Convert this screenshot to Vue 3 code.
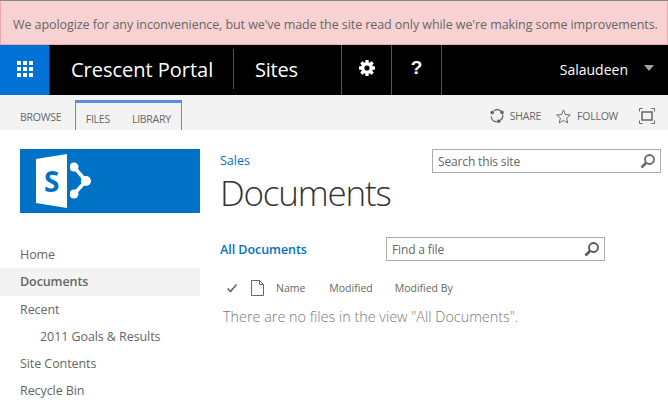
<script setup>
const navItems = [
  { label: "Home" },
  { label: "Documents", active: true },
  { label: "Recent" },
  { label: "2011 Goals & Results", sub: true },
  { label: "Site Contents" },
  { label: "Recycle Bin" },
]
</script>

<template>
  <div class="page">
    <div class="banner">We apologize for any inconvenience, but we've made the site read only while we're making some improvements.</div>

    <div class="suite">
      <div class="launcher">
        <svg width="16" height="16" viewBox="0 0 16 16" fill="#fff">
          <rect x="0" y="0" width="4" height="4" /><rect x="6" y="0" width="4" height="4" /><rect x="12" y="0" width="4" height="4" />
          <rect x="0" y="6" width="4" height="4" /><rect x="6" y="6" width="4" height="4" /><rect x="12" y="6" width="4" height="4" />
          <rect x="0" y="12" width="4" height="4" /><rect x="6" y="12" width="4" height="4" /><rect x="12" y="12" width="4" height="4" />
        </svg>
      </div>
      <div class="brand">Crescent Portal</div>
      <div class="sites">Sites</div>
      <div class="suite-btn first">
        <svg width="16" height="16" viewBox="0 0 16 16">
          <g fill="#fff">
            <rect x="6.300" y="0" width="3.400" height="16" rx=".6" />
            <rect x="6.300" y="0" width="3.400" height="16" rx=".6" transform="rotate(45 8 8)" />
            <rect x="6.300" y="0" width="3.400" height="16" rx=".6" transform="rotate(90 8 8)" />
            <rect x="6.300" y="0" width="3.400" height="16" rx=".6" transform="rotate(135 8 8)" />
            <circle cx="8" cy="8" r="6" />
          </g>
          <circle cx="8" cy="8" r="2.600" fill="#000" />
        </svg>
      </div>
      <div class="suite-btn help">?</div>
      <div class="user">
        <span>Salaudeen</span>
        <i class="caret"></i>
      </div>
    </div>

    <div class="ribbon">
      <div class="tabs">
        <span class="tab">BROWSE</span>
        <div class="tab-group">
          <span class="tab">FILES</span>
          <span class="tab">LIBRARY</span>
        </div>
      </div>
      <div class="actions">
        <span class="action">
          <svg width="14" height="14" viewBox="0 0 14 14" fill="none" stroke="#666" stroke-width="1.300">
            <path d="M3.800 1.900A5.800 5.800 0 0 1 11 2.200M12.700 5.500a5.800 5.800 0 0 1-2.600 6M6.800 12.800A5.800 5.800 0 0 1 1.200 7.500" />
            <circle cx="2.200" cy="3.600" r="1.800" fill="#666" stroke="none" />
            <circle cx="12" cy="3.400" r="1.800" fill="#666" stroke="none" />
            <circle cx="8.700" cy="12.200" r="1.800" fill="#666" stroke="none" />
          </svg>
          SHARE
        </span>
        <span class="action follow">
          <svg width="15" height="15" viewBox="0 0 16 16" fill="none" stroke="#666" stroke-width="1">
            <path d="M8 1l2 4.900 5.300.4-4 3.400 1.300 5.200L8 12.100l-4.600 2.800 1.300-5.200-4-3.400L6 5.900z" />
          </svg>
          FOLLOW
        </span>
        <svg class="focus" width="16" height="16" viewBox="0 0 16 16" fill="none" stroke="#666">
          <path d="M.5 3.500v-3h3M12.500.5h3v3M15.500 12.500v3h-3M3.500 15.500h-3v-3" />
          <rect x="3" y="4" width="10" height="8" stroke-width="1.500" />
        </svg>
      </div>
    </div>

    <div class="body">
      <aside class="side">
        <div class="logo">
          <svg width="56" height="54" viewBox="0 0 56 54">
            <path fill="#fff" d="M0 5L31 0V54L0 49z" />
            <path fill="none" stroke="#fff" stroke-width="3.500" d="M38 13L50 27L38 40" />
            <circle cx="38" cy="13" r="4.500" fill="#fff" />
            <circle cx="50" cy="27" r="5" fill="#fff" />
            <circle cx="38" cy="40" r="4.500" fill="#fff" />
            <rect x="31" y="5" width="3" height="44" fill="#0072c6" />
            <text x="8" y="38" class="logo-s">S</text>
          </svg>
        </div>
        <nav class="nav">
          <div v-for="item in navItems" :key="item.label" class="nav-item" :class="{ active: item.active, sub: item.sub }">{{ item.label }}</div>
        </nav>
      </aside>

      <main class="content">
        <div class="head">
          <div>
            <a class="crumb">Sales</a>
            <h1>Documents</h1>
          </div>
          <div class="searchbox site-search">
            <span>Search this site</span>
            <svg width="16" height="16" viewBox="0 0 16 16" fill="none" stroke="#666">
              <circle cx="9.500" cy="6.500" r="4.500" stroke-width="1.800" />
              <path d="M6 10l-4.500 4.500" stroke-width="2.500" />
            </svg>
          </div>
        </div>

        <div class="view-row">
          <a class="view">All Documents</a>
          <div class="searchbox file-search">
            <span>Find a file</span>
            <svg width="16" height="16" viewBox="0 0 16 16" fill="none" stroke="#555">
              <circle cx="9.500" cy="6.500" r="4.500" stroke-width="1.800" />
              <path d="M6 10l-4.500 4.500" stroke-width="2.500" />
            </svg>
          </div>
        </div>

        <div class="cols">
          <svg class="check" width="12" height="12" viewBox="0 0 12 12" fill="none" stroke="#666" stroke-width="1.600">
            <path d="M1.500 6.500l3 3 6-7" />
          </svg>
          <svg class="doc" width="13" height="16" viewBox="0 0 13 16" fill="none" stroke="#666">
            <path d="M.5.500h8l4 4v11h-12zM8.500.500v4h4" />
          </svg>
          <span class="col name">Name</span>
          <span class="col modified">Modified</span>
          <span class="col by">Modified By</span>
        </div>
        <div class="empty">There are no files in the view "All Documents".</div>
      </main>
    </div>
  </div>
</template>

<style>
html,
body {
  margin: 0;
  background: #fff;
  overflow: hidden;
}
</style>

<style scoped>
.page {
  width: 668px;
  height: 410px;
  overflow: hidden;
  font-family: "Open Sans", "Noto Sans", sans-serif;
  color: #666;
  border-top: 1px solid #888;
  box-sizing: border-box;
}

.banner {
  height: 44px;
  box-sizing: border-box;
  background: #f8d2d2;
  border: 1px solid #f0a8a8;
  border-top-color: #f8d2d2;
  padding: 0 0 0 12px;
  font-size: 12.500px;
  letter-spacing: -0.075px;
  line-height: 46px;
  white-space: nowrap;
  color: #666;
}

.suite {
  height: 50px;
  background: #000;
  display: flex;
  color: #fff;
}

.launcher {
  width: 50px;
  background: #0072d6;
  display: flex;
  align-items: center;
  justify-content: center;
  border-right: 1px solid #333;
  box-sizing: border-box;
}

.launcher svg {
  margin-top: -2px;
}

.brand {
  margin-left: 21px;
  width: 163px;
  font-size: 20px;
  line-height: 50px;
  position: relative;
  letter-spacing: -0.020px;
}

.brand::after {
  content: "";
  position: absolute;
  right: 0;
  top: 4px;
  height: 40px;
  width: 1px;
  background: #555;
}

.sites {
  margin-left: 21px;
  width: 86px;
  font-size: 20px;
  line-height: 50px;
  letter-spacing: -0.200px;
}

.suite-btn {
  width: 50px;
  height: 50px;
  border-left: 1px solid #555;
  box-sizing: border-box;
  display: flex;
  align-items: center;
  justify-content: center;
  padding-bottom: 4px;
}

.help {
  font-family: "Liberation Sans", sans-serif;
  font-size: 19px;
  font-weight: 700;
  border-right: 1px solid #555;
  width: 51px;
}

.user {
  margin-left: auto;
  display: flex;
  align-items: center;
  font-size: 14px;
  padding-right: 14px;
  padding-bottom: 1px;
  box-sizing: border-box;
}

.caret {
  display: block;
  margin-left: 16px;
  width: 0;
  height: 0;
  border-left: 5px solid transparent;
  border-right: 5px solid transparent;
  border-top: 6px solid #a0a0a0;
  margin-top: -3px;
}

.ribbon {
  height: 35px;
  background: #f3f3f3;
  display: flex;
  justify-content: space-between;
  font-size: 10.500px;
  letter-spacing: -0.250px;
}

.tabs {
  display: flex;
  align-items: flex-end;
  padding-left: 20px;
}

.tab {
  line-height: 33px;
  height: 29px;
  display: block;
}

.tab-group {
  display: flex;
  gap: 22px;
  height: 30px;
  margin-left: 13.500px;
  padding: 0 10px 0 10px;
  border: 1px solid #5b8fdc;
  border-top-width: 3px;
  border-bottom: 0;
  box-sizing: border-box;
  background: #f3f3f3;
}

.actions {
  display: flex;
  align-items: center;
  padding-right: 13px;
  padding-top: 7px;
  box-sizing: border-box;
}

.action {
  display: flex;
  align-items: center;
  gap: 6px;
}

.follow {
  margin-left: 15px;
}

.focus {
  margin-left: 21px;
}

.body {
  display: flex;
}

.side {
  width: 200px;
  flex: none;
}

.logo {
  margin: 19px 0 0 20px;
  width: 180px;
  height: 64px;
  background: #0072c6;
  display: flex;
  align-items: center;
  padding-left: 16px;
  box-sizing: border-box;
}

.logo-s {
  font-family: "Open Sans", sans-serif;
  font-size: 28px;
  font-weight: 700;
  fill: #0072c6;
}

.nav {
  margin-top: 28.200px;
  font-size: 12.500px;
  letter-spacing: -0.080px;
}

.nav-item {
  height: 27.200px;
  line-height: 27px;
  padding-left: 20px;
  white-space: nowrap;
}

.nav-item.active {
  background: #f3f3f3;
  font-weight: 600;
}

.nav-item.sub {
  padding-left: 40px;
}

.content {
  flex: 1;
  padding: 0 0 0 20px;
  min-width: 0;
}

.head {
  display: flex;
  align-items: flex-start;
  justify-content: space-between;
  padding-right: 7px;
}

.crumb {
  display: block;
  margin-top: 22px;
  color: #0072c6;
  font-size: 12.500px;
  line-height: 17px;
}

h1 {
  margin: 0;
  font-family: "Open Sans", sans-serif;
  font-weight: 300;
  font-size: 35px;
  letter-spacing: -1.200px;
  line-height: 48px;
  color: #333;
}

.searchbox {
  display: flex;
  align-items: center;
  justify-content: space-between;
  box-sizing: border-box;
  height: 24px;
  border: 1px solid #ababab;
  font-size: 12px;
  letter-spacing: -0.150px;
  padding: 0 4px 0 5px;
  background: #fff;
}

.site-search {
  width: 229px;
  margin-top: 19px;
}

.view-row {
  display: flex;
  align-items: center;
  margin-top: 20px;
}

.view {
  width: 166px;
  color: #0072c6;
  font-size: 12.500px;
  font-weight: 600;
  letter-spacing: -0.050px;
}

.file-search {
  width: 219px;
}

.cols {
  display: flex;
  align-items: center;
  margin-top: 17px;
  height: 20px;
  font-size: 10.500px;
}

.check {
  margin-left: 6px;
}

.doc {
  margin-left: 13px;
}

.name {
  margin-left: 12px;
}

.col.modified {
  margin-left: 24px;
}

.col.by {
  margin-left: 22px;
}

.empty {
  margin: 9px 0 0 3px;
  font-size: 14.400px;
  font-weight: 300;
  white-space: nowrap;
  color: #777;
}
</style>
